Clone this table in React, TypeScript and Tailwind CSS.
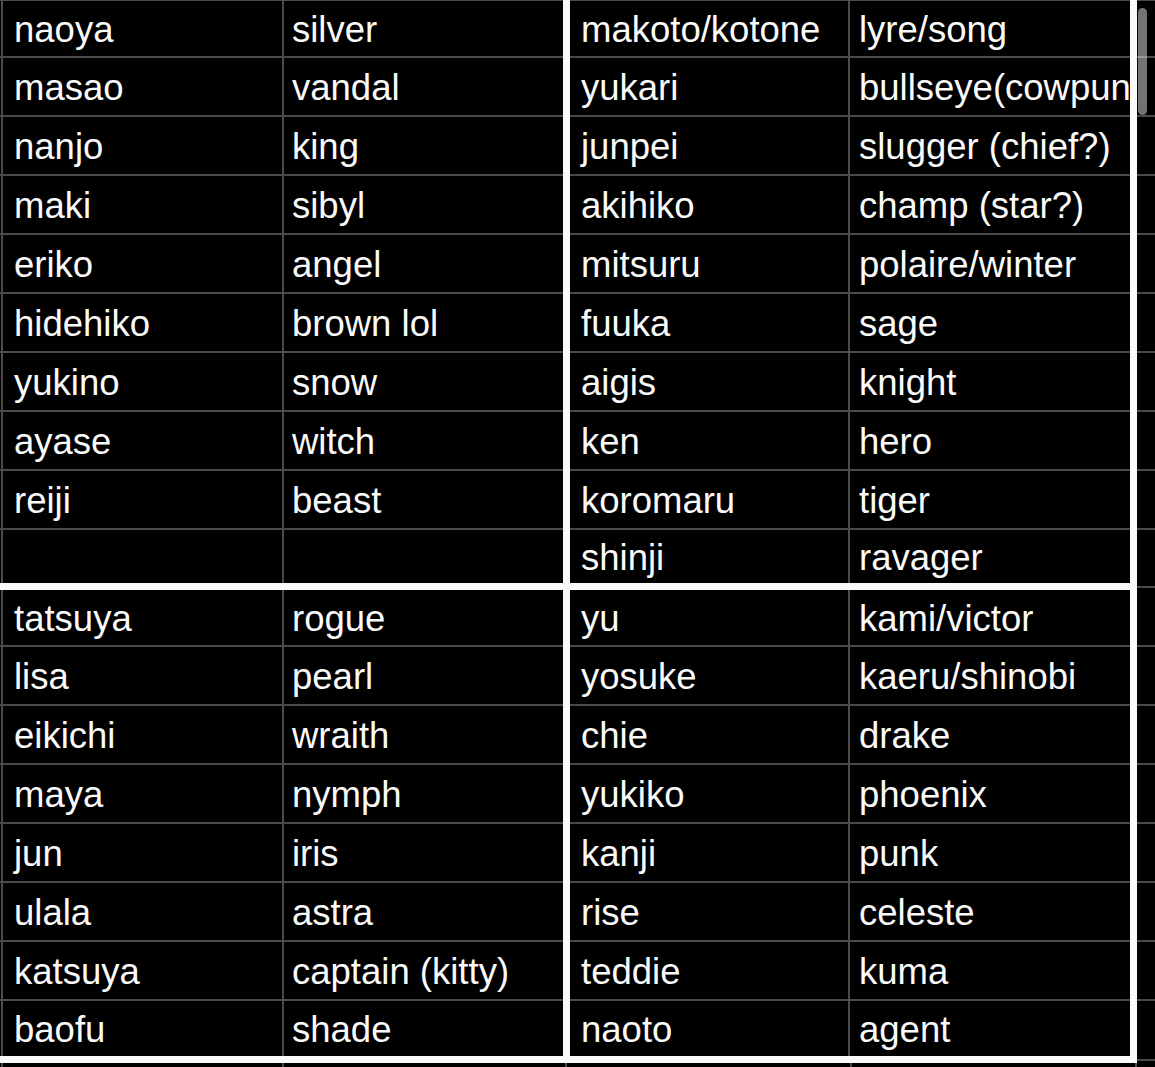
import React from "react";

const GRAY = "bg-[#4a4a4a]";

type RowData = [string, string, string, string];

const top: RowData[] = [
  ["naoya", "silver", "makoto/kotone", "lyre/song"],
  ["masao", "vandal", "yukari", "bullseye(cowpun"],
  ["nanjo", "king", "junpei", "slugger (chief?)"],
  ["maki", "sibyl", "akihiko", "champ (star?)"],
  ["eriko", "angel", "mitsuru", "polaire/winter"],
  ["hidehiko", "brown lol", "fuuka", "sage"],
  ["yukino", "snow", "aigis", "knight"],
  ["ayase", "witch", "ken", "hero"],
  ["reiji", "beast", "koromaru", "tiger"],
  ["", "", "shinji", "ravager"],
];

const bottom: RowData[] = [
  ["tatsuya", "rogue", "yu", "kami/victor"],
  ["lisa", "pearl", "yosuke", "kaeru/shinobi"],
  ["eikichi", "wraith", "chie", "drake"],
  ["maya", "nymph", "yukiko", "phoenix"],
  ["jun", "iris", "kanji", "punk"],
  ["ulala", "astra", "rise", "celeste"],
  ["katsuya", "captain (kitty)", "teddie", "kuma"],
  ["baofu", "shade", "naoto", "agent"],
];

function Cell({ w, pl, text }: { w: string; pl: string; text: string }) {
  return (
    <div
      className={`${w} ${pl} pt-[3px] shrink-0 flex items-center overflow-hidden whitespace-nowrap text-[36.5px] text-[#fafafa]`}
    >
      {text}
    </div>
  );
}

function Row({ d, h }: { d: RowData; h: string }) {
  return (
    <div className={`flex ${h}`}>
      <div className="w-[1px] shrink-0 bg-black" />
      <div className={`w-[2px] shrink-0 ${GRAY}`} />
      <Cell w="w-[279px]" pl="pl-[11px]" text={d[0]} />
      <div className={`w-[2px] shrink-0 ${GRAY}`} />
      <Cell w="w-[279px]" pl="pl-[8px]" text={d[1]} />
      <div className="w-[7px] shrink-0 bg-[#fafafa]" />
      <Cell w="w-[278px]" pl="pl-[11px]" text={d[2]} />
      <div className={`w-[2px] shrink-0 ${GRAY}`} />
      <Cell w="w-[280px]" pl="pl-[9px]" text={d[3]} />
      <div className="w-[7px] shrink-0 bg-[#fafafa]" />
      <div className="flex-1 bg-black" />
    </div>
  );
}

function GrayLine({ h }: { h: string }) {
  return (
    <div className={`flex ${h}`}>
      <div className={`w-[563px] shrink-0 ${GRAY}`} />
      <div className="w-[7px] shrink-0 bg-[#fafafa]" />
      <div className={`w-[560px] shrink-0 ${GRAY}`} />
      <div className="w-[7px] shrink-0 bg-[#fafafa]" />
      <div className={`flex-1 ${GRAY}`} />
    </div>
  );
}

function WhiteLine() {
  return (
    <div className="flex h-[7px]">
      <div className="w-[1137px] shrink-0 bg-[#fafafa]" />
      <div className="flex-1 flex flex-col justify-center bg-black">
        <div className={`h-[2px] ${GRAY}`} />
      </div>
    </div>
  );
}

function Block({ rows, first, last }: { rows: RowData[]; first: string; last: string }) {
  return (
    <>
      {rows.map((r, i) => {
        const h = i === 0 ? first : i === rows.length - 1 ? last : "h-[57px]";
        return (
          <React.Fragment key={i}>
            <Row d={r} h={h} />
            {i < rows.length - 1 && <GrayLine h="h-[2px]" />}
          </React.Fragment>
        );
      })}
    </>
  );
}

export default function App() {
  return (
    <div
      className="relative w-[1155px] h-[1067px] overflow-hidden bg-black"
      style={{ fontFamily: '"Liberation Sans", Arial, sans-serif' }}
    >
      <GrayLine h="h-[1px]" />
      <Block rows={top} first="h-[55px]" last="h-[53px]" />
      <WhiteLine />
      <Block rows={bottom} first="h-[55px]" last="h-[55px]" />
      <WhiteLine />
      <div className="flex h-[4px]">
        <div className="w-[1px] shrink-0 bg-black" />
        <div className={`w-[2px] shrink-0 ${GRAY}`} />
        <div className="w-[279px] shrink-0 bg-black" />
        <div className={`w-[2px] shrink-0 ${GRAY}`} />
        <div className="w-[281px] shrink-0 bg-black" />
        <div className={`w-[2px] shrink-0 ${GRAY}`} />
        <div className="w-[283px] shrink-0 bg-black" />
        <div className={`w-[2px] shrink-0 ${GRAY}`} />
        <div className="w-[283px] shrink-0 bg-black" />
        <div className={`w-[2px] shrink-0 ${GRAY}`} />
        <div className="flex-1 bg-black" />
      </div>
      <div className="absolute left-[1138px] top-[8px] w-[9px] h-[107px] rounded-full bg-white/45" />
    </div>
  );
}
